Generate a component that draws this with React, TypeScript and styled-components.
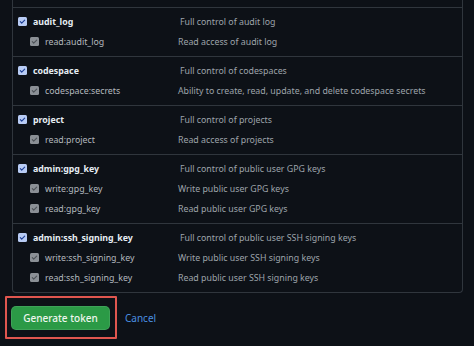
import styled, { createGlobalStyle } from 'styled-components'

const GlobalStyle = createGlobalStyle`
  html, body {
    margin: 0;
    padding: 0;
    background: #0d1117;
    height: 100%;
  }
  body {
    font-family: "Noto Sans", "Open Sans", sans-serif;
    color: #e6edf3;
    overflow: hidden;
  }
`

const Page = styled.div`
  width: 474px;
  height: 346px;
  padding-left: 12px;
  box-sizing: border-box;
  background: #0d1117;
`

const Panel = styled.div`
  width: 451px;
  box-sizing: border-box;
  padding-top: 7px;
  border: 1px solid #30363d;
  border-top: none;
  border-radius: 0 0 4px 4px;
`

const Group = styled.div`
  border-top: 1px solid #30363d;
  padding: 4px 0;
`

const Row = styled.div<{ $child?: boolean }>`
  display: grid;
  grid-template-columns: 165px 1fr;
  align-items: center;
  height: ${(p) => (p.$child ? '20px' : '20px')};
`

const Name = styled.label<{ $child?: boolean }>`
  display: flex;
  align-items: center;
  gap: 6px;
  padding-left: ${(p) => (p.$child ? '17px' : '5px')};
  font-size: 8.8px;
  font-weight: ${(p) => (p.$child ? 400 : 700)};
  color: ${(p) => (p.$child ? '#b4b9bf' : '#e6edf3')};
  white-space: nowrap;
`

const Box = styled.span<{ $child?: boolean }>`
  flex: none;
  width: 9px;
  height: 9px;
  border-radius: 1.5px;
  background: ${(p) => (p.$child ? '#8b9096' : '#b8ccf5')};
  display: flex;
  align-items: center;
  justify-content: center;
  margin-top: -2px;
`

const Desc = styled.span<{ $child?: boolean }>`
  font-size: 8.8px;
  color: #9ea4ab;
  white-space: nowrap;
  padding-left: ${(p) => (p.$child ? '0' : '2px')};
`

const Footer = styled.div`
  display: flex;
  align-items: center;
  gap: 8px;
  margin-top: 3px;
  margin-left: -7px;
`

const Highlight = styled.div`
  border: 2px solid #e0564f;
  padding: 7px 5px 7px 4px;
  border-radius: 1px;
`

const GreenButton = styled.button`
  width: 99px;
  height: 24px;
  border: 1px solid rgba(240, 246, 252, 0.1);
  border-radius: 5px;
  background: #2b9a46;
  color: #eef6ef;
  font-family: "Noto Sans", "Open Sans", sans-serif;
  font-size: 10px;
  font-weight: 500;
  padding: 0;
  cursor: pointer;
`

const CancelLink = styled.a`
  font-size: 10px;
  color: #4a8fe0;
  text-decoration: none;
`

function Check({ child }: { child?: boolean }) {
  return (
    <Box $child={child}>
      <svg width="7" height="7" viewBox="0 0 16 16">
        <path
          d="M3 8.5l3.2 3.2L13 4.8"
          fill="none"
          stroke={child ? '#4d5258' : '#1d3f95'}
          strokeWidth="2.6"
          strokeLinecap="round"
          strokeLinejoin="round"
        />
      </svg>
    </Box>
  )
}

type Scope = { name: string; desc: string; children: { name: string; desc: string }[] }

const scopes: Scope[] = [
  {
    name: 'audit_log',
    desc: 'Full control of audit log',
    children: [{ name: 'read:audit_log', desc: 'Read access of audit log' }],
  },
  {
    name: 'codespace',
    desc: 'Full control of codespaces',
    children: [
      {
        name: 'codespace:secrets',
        desc: 'Ability to create, read, update, and delete codespace secrets',
      },
    ],
  },
  {
    name: 'project',
    desc: 'Full control of projects',
    children: [{ name: 'read:project', desc: 'Read access of projects' }],
  },
  {
    name: 'admin:gpg_key',
    desc: 'Full control of public user GPG keys',
    children: [
      { name: 'write:gpg_key', desc: 'Write public user GPG keys' },
      { name: 'read:gpg_key', desc: 'Read public user GPG keys' },
    ],
  },
  {
    name: 'admin:ssh_signing_key',
    desc: 'Full control of public user SSH signing keys',
    children: [
      { name: 'write:ssh_signing_key', desc: 'Write public user SSH signing keys' },
      { name: 'read:ssh_signing_key', desc: 'Read public user SSH signing keys' },
    ],
  },
]

export default function App() {
  return (
    <Page>
      <GlobalStyle />
      <Panel>
        {scopes.map((s) => (
          <Group key={s.name}>
            <Row>
              <Name>
                <Check />
                {s.name}
              </Name>
              <Desc>{s.desc}</Desc>
            </Row>
            {s.children.map((c) => (
              <Row key={c.name} $child>
                <Name $child>
                  <Check child />
                  {c.name}
                </Name>
                <Desc $child>{c.desc}</Desc>
              </Row>
            ))}
          </Group>
        ))}
      </Panel>
      <Footer>
        <Highlight>
          <GreenButton>Generate token</GreenButton>
        </Highlight>
        <CancelLink href="#">Cancel</CancelLink>
      </Footer>
    </Page>
  )
}
